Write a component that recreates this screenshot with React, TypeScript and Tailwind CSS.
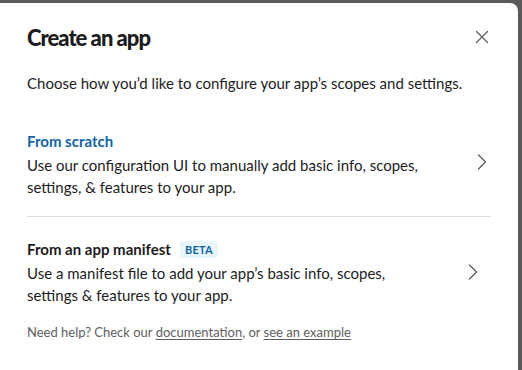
import { X, ChevronRight } from "lucide-react";

type OptionProps = {
  title: string;
  titleClass: string;
  badge?: string;
  lines: string[];
  chevronClass: string;
};

function Option({ title, titleClass, badge, lines, chevronClass }: OptionProps) {
  return (
    <div className="flex items-center">
      <div className="flex-1">
        <div className="flex items-center gap-[9px] h-[24px] mb-[1px]">
          <span className={`text-[15px] font-bold ${titleClass}`}>{title}</span>
          {badge && (
            <span className="h-[17px] px-[5px] rounded-[4px] bg-[#e8f5fa] text-[#1264a3] text-[11px] font-bold leading-[17px] tracking-wide">
              {badge}
            </span>
          )}
        </div>
        {lines.map((l) => (
          <div key={l} className="text-[15px] leading-[22px] text-[#1d1c1d]">
            {l}
          </div>
        ))}
      </div>
      <ChevronRight className={`text-[#616061] ${chevronClass}`} size={28} strokeWidth={1.2} />
    </div>
  );
}

export default function App() {
  return (
    <div
      className="w-[522px] h-[370px] overflow-hidden bg-[#5a5a5a] pt-[3px]"
      style={{ fontFamily: "Lato, 'Noto Sans', sans-serif" }}
    >
      <div className="w-[518px] h-[400px] bg-white rounded-tr-[8px] pl-[27px] pr-[27px] pt-[19px]">
        <div className="flex items-center justify-between h-[30px]">
          <h1 className="text-[22px] font-black tracking-[-1px] text-[#1d1c1d]">Create an app</h1>
          <X className="text-[#616061] mr-[-1.5px]" size={22} strokeWidth={1.4} />
        </div>
        <p className="mt-[20px] text-[15px] leading-[22px] text-[#1d1c1d]">
          Choose how you’d like to configure your app’s scopes and settings.
        </p>
        <div className="mt-[35px]">
          <Option
            title="From scratch"
            titleClass="text-[#1264a3]"
            lines={[
              "Use our configuration UI to manually add basic info, scopes,",
              "settings, & features to your app.",
            ]}
            chevronClass="mr-[-4.5px] mt-[-3px]"
          />
        </div>
        <div className="mt-[18px] border-t border-[#dddddd]" />
        <div className="mt-[20px]">
          <Option
            title="From an app manifest"
            titleClass="text-[#1d1c1d]"
            badge="BETA"
            lines={[
              "Use a manifest file to add your app’s basic info, scopes,",
              "settings & features to your app.",
            ]}
            chevronClass="mr-[4px]"
          />
        </div>
        <p className="mt-[17px] text-[13px] leading-[18px] text-[#616061]">
          Need help? Check our <span className="underline underline-offset-2">documentation</span>, or{" "}
          <span className="underline underline-offset-2">see an example</span>
        </p>
      </div>
    </div>
  );
}
